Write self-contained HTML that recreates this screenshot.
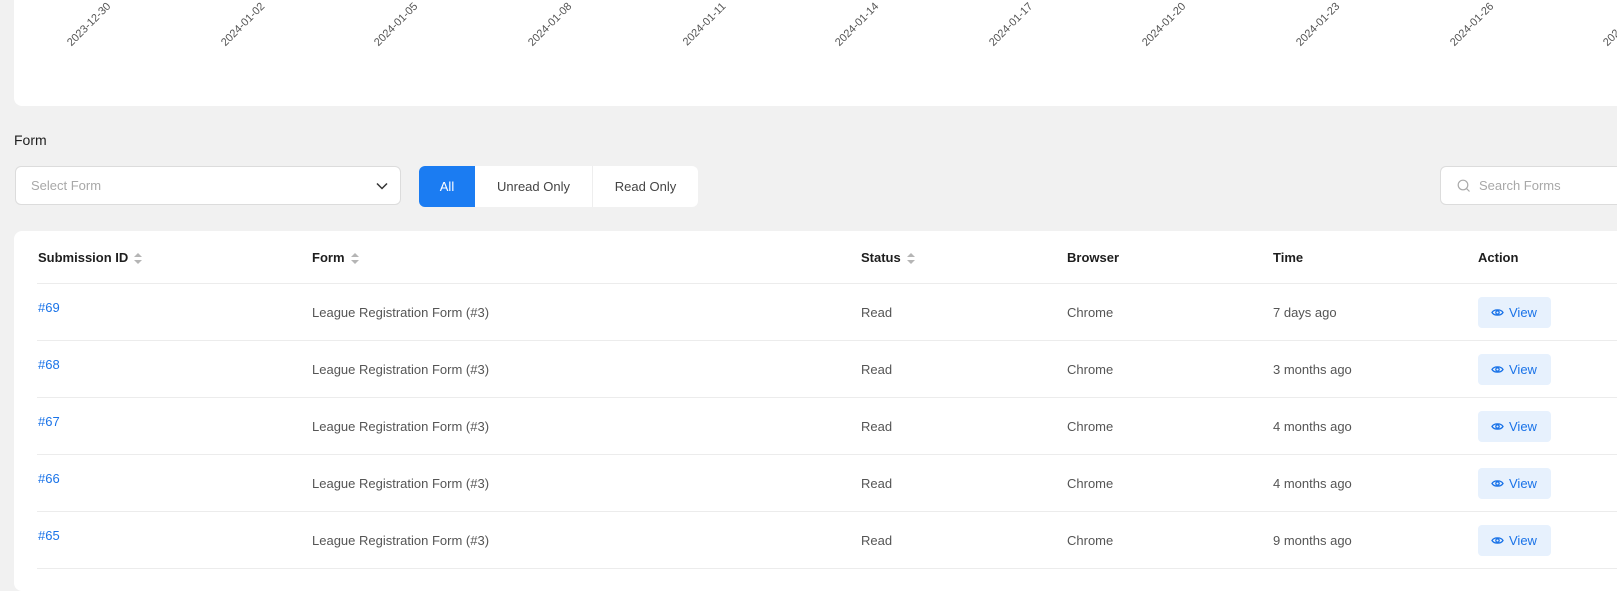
<!DOCTYPE html>
<html><head><style>
*{box-sizing:border-box;margin:0;padding:0}
body{width:1617px;height:571px;overflow:hidden;background:#f1f1f1;font-family:"Liberation Sans",sans-serif;position:relative;color:#1d2327}
.card{position:absolute;background:#fff;border-radius:8px}
.dl{position:absolute;font-size:11px;color:#555;transform:rotate(-45deg);transform-origin:right bottom;white-space:nowrap}
.abs{position:absolute}
.th{position:absolute;top:250px;font-size:13px;font-weight:bold;color:#1e1e1e}
.sort{display:inline-block;vertical-align:middle;margin-left:6px;width:8px;height:11px;position:relative}
.sort:before{content:"";position:absolute;left:0;top:0;border:4px solid transparent;border-bottom:4px solid #b5b5b5;border-top:0}
.sort:after{content:"";position:absolute;left:0;bottom:0;border:4px solid transparent;border-top:4px solid #b5b5b5;border-bottom:0}
.line{position:absolute;left:37px;right:0;height:1px;background:#ececec}
.td{position:absolute;font-size:13px;color:#555}
.id{color:#1a73e8}
.view{position:absolute;left:1478px;width:73px;height:31px;background:#e7f1fd;border-radius:4px;color:#1a73e8;font-size:13px;line-height:31px;padding-left:31px}
.view svg{position:absolute;left:13px;top:10px}
</style></head><body>
<div class="card" style="left:14px;top:-10px;width:1620px;height:116px"></div>
<div class="dl" style="right:calc(1617px - 113px);top:-3px">2023-12-30</div>
<div class="dl" style="right:calc(1617px - 267px);top:-3px">2024-01-02</div>
<div class="dl" style="right:calc(1617px - 420px);top:-3px">2024-01-05</div>
<div class="dl" style="right:calc(1617px - 574px);top:-3px">2024-01-08</div>
<div class="dl" style="right:calc(1617px - 728px);top:-3px">2024-01-11</div>
<div class="dl" style="right:calc(1617px - 881px);top:-3px">2024-01-14</div>
<div class="dl" style="right:calc(1617px - 1035px);top:-3px">2024-01-17</div>
<div class="dl" style="right:calc(1617px - 1188px);top:-3px">2024-01-20</div>
<div class="dl" style="right:calc(1617px - 1342px);top:-3px">2024-01-23</div>
<div class="dl" style="right:calc(1617px - 1496px);top:-3px">2024-01-26</div>
<div class="dl" style="right:calc(1617px - 1649px);top:-3px">2024-01-29</div>

<div class="abs" style="left:14px;top:132px;font-size:14px;color:#1e1e1e">Form</div>
<div class="abs" style="left:15px;top:166px;width:386px;height:39px;background:#fff;border:1px solid #dcdcdc;border-radius:6px">
 <span class="abs" style="left:15px;top:11px;font-size:13px;color:#a8a8a8">Select Form</span>
 <svg class="abs" style="left:360px;top:14px" width="12" height="10" viewBox="0 0 12 10"><path d="M1 2.5L6 7.5L11 2.5" fill="none" stroke="#333" stroke-width="1.5"/></svg>
</div>
<div class="abs" style="left:419px;top:166px;width:279px;height:41px;background:#fff;border-radius:6px;overflow:hidden;font-size:13px;color:#444">
 <div class="abs" style="left:0;top:0;width:56px;height:41px;background:#1b7cf2;color:#fff;text-align:center;line-height:41px">All</div>
 <div class="abs" style="left:56px;top:0;width:118px;height:41px;text-align:center;line-height:41px;border-right:1px solid #eee">Unread Only</div>
 <div class="abs" style="left:174px;top:0;width:105px;height:41px;text-align:center;line-height:41px">Read Only</div>
</div>
<div class="abs" style="left:1440px;top:166px;width:200px;height:39px;background:#fff;border:1px solid #dcdcdc;border-radius:6px">
 <svg class="abs" style="left:16px;top:12px" width="14" height="14" viewBox="0 0 14 14"><circle cx="6" cy="6" r="4.8" fill="none" stroke="#aaa" stroke-width="1.2"/><path d="M9.5 9.5L12.5 12.5" stroke="#aaa" stroke-width="1.2"/></svg>
 <span class="abs" style="left:38px;top:11px;font-size:13px;color:#a8a8a8">Search Forms</span>
</div>

<div class="card" style="left:14px;top:231px;width:1620px;height:360px"></div>
<div class="th" style="left:38px">Submission ID<span class="sort"></span></div>
<div class="th" style="left:312px">Form<span class="sort"></span></div>
<div class="th" style="left:861px">Status<span class="sort"></span></div>
<div class="th" style="left:1067px">Browser</div>
<div class="th" style="left:1273px">Time</div>
<div class="th" style="left:1478px">Action</div>
<div class="line" style="top:283px"></div>
<div class="line" style="top:340px"></div>
<div class="line" style="top:397px"></div>
<div class="line" style="top:454px"></div>
<div class="line" style="top:511px"></div>
<div class="line" style="top:568px"></div>

<div class="td id" style="left:38px;top:300px">#69</div>
<div class="td id" style="left:38px;top:357px">#68</div>
<div class="td id" style="left:38px;top:414px">#67</div>
<div class="td id" style="left:38px;top:471px">#66</div>
<div class="td id" style="left:38px;top:528px">#65</div>

<div class="td" style="left:312px;top:305px">League Registration Form (#3)</div>
<div class="td" style="left:312px;top:362px">League Registration Form (#3)</div>
<div class="td" style="left:312px;top:419px">League Registration Form (#3)</div>
<div class="td" style="left:312px;top:476px">League Registration Form (#3)</div>
<div class="td" style="left:312px;top:533px">League Registration Form (#3)</div>

<div class="td" style="left:861px;top:305px">Read</div>
<div class="td" style="left:861px;top:362px">Read</div>
<div class="td" style="left:861px;top:419px">Read</div>
<div class="td" style="left:861px;top:476px">Read</div>
<div class="td" style="left:861px;top:533px">Read</div>

<div class="td" style="left:1067px;top:305px">Chrome</div>
<div class="td" style="left:1067px;top:362px">Chrome</div>
<div class="td" style="left:1067px;top:419px">Chrome</div>
<div class="td" style="left:1067px;top:476px">Chrome</div>
<div class="td" style="left:1067px;top:533px">Chrome</div>

<div class="td" style="left:1273px;top:305px">7 days ago</div>
<div class="td" style="left:1273px;top:362px">3 months ago</div>
<div class="td" style="left:1273px;top:419px">4 months ago</div>
<div class="td" style="left:1273px;top:476px">4 months ago</div>
<div class="td" style="left:1273px;top:533px">9 months ago</div>

<div class="view" style="top:297px"><svg width="13" height="11" viewBox="0 0 13 11"><path d="M1 5.5C3 2 10 2 12 5.5C10 9 3 9 1 5.5Z" fill="none" stroke="#1a73e8" stroke-width="1.3"/><circle cx="6.5" cy="5.5" r="1.7" fill="none" stroke="#1a73e8" stroke-width="1.3"/></svg>View</div>
<div class="view" style="top:354px"><svg width="13" height="11" viewBox="0 0 13 11"><path d="M1 5.5C3 2 10 2 12 5.5C10 9 3 9 1 5.5Z" fill="none" stroke="#1a73e8" stroke-width="1.3"/><circle cx="6.5" cy="5.5" r="1.7" fill="none" stroke="#1a73e8" stroke-width="1.3"/></svg>View</div>
<div class="view" style="top:411px"><svg width="13" height="11" viewBox="0 0 13 11"><path d="M1 5.5C3 2 10 2 12 5.5C10 9 3 9 1 5.5Z" fill="none" stroke="#1a73e8" stroke-width="1.3"/><circle cx="6.5" cy="5.5" r="1.7" fill="none" stroke="#1a73e8" stroke-width="1.3"/></svg>View</div>
<div class="view" style="top:468px"><svg width="13" height="11" viewBox="0 0 13 11"><path d="M1 5.5C3 2 10 2 12 5.5C10 9 3 9 1 5.5Z" fill="none" stroke="#1a73e8" stroke-width="1.3"/><circle cx="6.5" cy="5.5" r="1.7" fill="none" stroke="#1a73e8" stroke-width="1.3"/></svg>View</div>
<div class="view" style="top:525px"><svg width="13" height="11" viewBox="0 0 13 11"><path d="M1 5.5C3 2 10 2 12 5.5C10 9 3 9 1 5.5Z" fill="none" stroke="#1a73e8" stroke-width="1.3"/><circle cx="6.5" cy="5.5" r="1.7" fill="none" stroke="#1a73e8" stroke-width="1.3"/></svg>View</div>
</body></html>
